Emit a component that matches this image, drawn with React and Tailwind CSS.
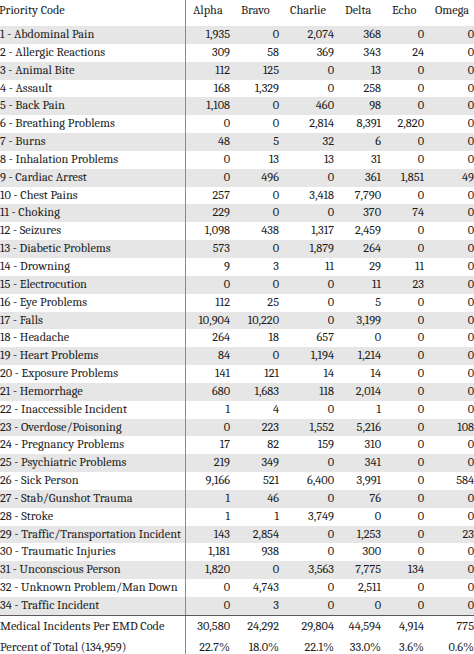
const columns = ['Alpha', 'Bravo', 'Charlie', 'Delta', 'Echo', 'Omega']

const rows = [
  ['1 - Abdominal Pain', '1,935', '0', '2,074', '368', '0', '0'],
  ['2 - Allergic Reactions', '309', '58', '369', '343', '24', '0'],
  ['3 - Animal Bite', '112', '125', '0', '13', '0', '0'],
  ['4 - Assault', '168', '1,329', '0', '258', '0', '0'],
  ['5 - Back Pain', '1,108', '0', '460', '98', '0', '0'],
  ['6 - Breathing Problems', '0', '0', '2,814', '8,391', '2,820', '0'],
  ['7 - Burns', '48', '5', '32', '6', '0', '0'],
  ['8 - Inhalation Problems', '0', '13', '13', '31', '0', '0'],
  ['9 - Cardiac Arrest', '0', '496', '0', '361', '1,851', '49'],
  ['10 - Chest Pains', '257', '0', '3,418', '7,790', '0', '0'],
  ['11 - Choking', '229', '0', '0', '370', '74', '0'],
  ['12 - Seizures', '1,098', '438', '1,317', '2,459', '0', '0'],
  ['13 - Diabetic Problems', '573', '0', '1,879', '264', '0', '0'],
  ['14 - Drowning', '9', '3', '11', '29', '11', '0'],
  ['15 - Electrocution', '0', '0', '0', '11', '23', '0'],
  ['16 - Eye Problems', '112', '25', '0', '5', '0', '0'],
  ['17 - Falls', '10,904', '10,220', '0', '3,199', '0', '0'],
  ['18 - Headache', '264', '18', '657', '0', '0', '0'],
  ['19 - Heart Problems', '84', '0', '1,194', '1,214', '0', '0'],
  ['20 - Exposure Problems', '141', '121', '14', '14', '0', '0'],
  ['21 - Hemorrhage', '680', '1,683', '118', '2,014', '0', '0'],
  ['22 - Inaccessible Incident', '1', '4', '0', '1', '0', '0'],
  ['23 - Overdose/Poisoning', '0', '223', '1,552', '5,216', '0', '108'],
  ['24 - Pregnancy Problems', '17', '82', '159', '310', '0', '0'],
  ['25 - Psychiatric Problems', '219', '349', '0', '341', '0', '0'],
  ['26 - Sick Person', '9,166', '521', '6,400', '3,991', '0', '584'],
  ['27 - Stab/Gunshot Trauma', '1', '46', '0', '76', '0', '0'],
  ['28 - Stroke', '1', '1', '3,749', '0', '0', '0'],
  ['29 - Traffic/Transportation Incident', '143', '2,854', '0', '1,253', '0', '23'],
  ['30 - Traumatic Injuries', '1,181', '938', '0', '300', '0', '0'],
  ['31 - Unconscious Person', '1,820', '0', '3,563', '7,775', '134', '0'],
  ['32 - Unknown Problem/Man Down', '0', '4,743', '0', '2,511', '0', '0'],
  ['34 - Traffic Incident', '0', '3', '0', '0', '0', '0'],
]

const totals = [
  ['Medical Incidents Per EMD Code', '30,580', '24,292', '29,804', '44,594', '4,914', '775'],
  ['Percent of Total (134,959)', '22.7%', '18.0%', '22.1%', '33.0%', '3.6%', '0.6%'],
]

const grid = 'grid grid-cols-[186px_48px_49px_55px_47px_43px_50px]'

function Row({ cells, className }) {
  return (
    <div className={`${grid} ${className}`}>
      <div className="border-r border-[#8a8a8a] whitespace-nowrap overflow-hidden">{cells[0]}</div>
      {cells.slice(1).map((v, i) => (
        <div key={i} className="text-right pr-1 whitespace-nowrap">{v}</div>
      ))}
    </div>
  )
}

export default function App() {
  return (
    <div className="w-[474px] h-[654px] overflow-hidden bg-white text-[#1c1c1c] text-[12.3px] font-serif">
      <div className={`${grid} h-[26px] leading-[16px]`}>
        <div className="border-r border-[#8a8a8a] pt-[2px] -ml-[1px]">Priority Code</div>
        {columns.map(c => (
          <div key={c} className="pl-[7px] pt-[2px] whitespace-nowrap">{c}</div>
        ))}
      </div>

      {rows.map((r, i) => (
        <Row
          key={r[0]}
          cells={r}
          className={`h-[17.85px] leading-[17.85px] ${i % 2 === 0 ? 'bg-[#e6e6e6]' : ''}`}
        />
      ))}

      <div className="border-t border-[#5a5a5a]">
        {totals.map(r => (
          <Row key={r[0]} cells={r} className="h-[21px] leading-[21px]" />
        ))}
      </div>
    </div>
  )
}
